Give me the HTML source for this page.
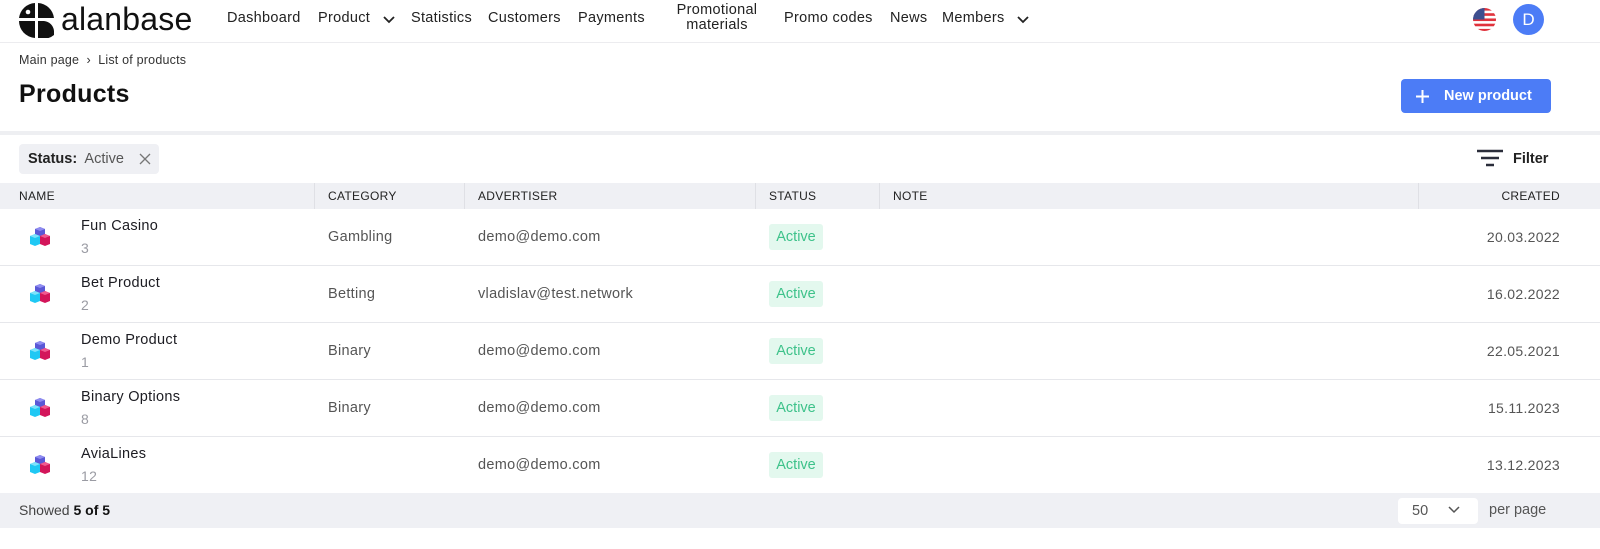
<!DOCTYPE html>
<html><head><meta charset="utf-8"><style>
*{box-sizing:border-box;margin:0;padding:0}
body{width:1600px;height:549px;background:#fff;font-family:"Liberation Sans",sans-serif;color:#1c1c22;position:relative;overflow:hidden;font-size:14px}
.a{position:absolute;white-space:nowrap}
.hdr{position:absolute;left:0;top:0;width:1600px;height:43px;border-bottom:1px solid #ececef}
.nav{top:10px;font-size:14.5px;color:#222;letter-spacing:0.3px}
.th{position:absolute;top:183px;left:0;width:1600px;height:26px;background:#eff0f4;font-size:12px;color:#222;letter-spacing:0.3px}
.th span{position:absolute;top:6px}
.th i{position:absolute;top:0;width:1px;height:26px;background:#dfe0e5}
.row{position:absolute;left:0;width:1600px;height:57px;border-bottom:1px solid #e6e7eb;letter-spacing:0.3px}
.nm{position:absolute;left:81px;top:9px;font-size:14.5px;color:#1c1c22}
.id{position:absolute;left:81px;top:31px;font-size:14px;color:#9a9ba3}
.c{position:absolute;top:20px;font-size:14.5px;color:#555}
.st{position:absolute;left:769px;top:15px;height:26px;width:54px;background:#e3f8ee;color:#3dc28a;border-radius:3px;font-size:14.5px;text-align:center;line-height:26px;letter-spacing:0}
.dt{position:absolute;right:40px;top:20px;font-size:14px;color:#555}
.ic{position:absolute;left:29px;top:17px}
</style></head><body>
<div class="hdr"></div>
<svg class="a" style="left:18px;top:3px" width="38" height="35" viewBox="0 0 38 35">
<path d="M17 0A17 17 0 0 0 1 15H17Z" fill="#111"/><path d="M20 0A17 17 0 0 1 36 15H20Z" fill="#111"/>
<path d="M1 18H17V35A17 17 0 0 1 1 18Z" fill="#111"/><path d="M20 18H26A11 11 0 0 1 36 28L36 32A17 17 0 0 1 20 35Z" fill="#111"/>
<circle cx="10" cy="9" r="2.3" fill="#fff"/></svg>
<div class="a" style="left:61px;top:1px;font-size:32px;color:#111;letter-spacing:0.2px">alanbase</div>
<div class="a nav" style="left:227px">Dashboard</div>
<div class="a nav" style="left:318px">Product</div>
<svg class="a" style="left:382px;top:15px" width="14" height="9"><path d="M2 2l5 5 5-5" stroke="#222" stroke-width="1.8" fill="none"/></svg>
<div class="a nav" style="left:411px">Statistics</div>
<div class="a nav" style="left:488px">Customers</div>
<div class="a nav" style="left:578px">Payments</div>
<div class="a" style="left:662px;top:3px;width:110px;text-align:center;font-size:14.5px;line-height:15px;color:#222;letter-spacing:0.3px">Promotional<br>materials</div>
<div class="a nav" style="left:784px">Promo codes</div>
<div class="a nav" style="left:890px">News</div>
<div class="a nav" style="left:942px">Members</div>
<svg class="a" style="left:1016px;top:15px" width="14" height="9"><path d="M2 2l5 5 5-5" stroke="#222" stroke-width="1.8" fill="none"/></svg>
<svg class="a" style="left:1473px;top:8px" width="23" height="23" viewBox="0 0 22 22"><defs><clipPath id="f"><circle cx="11" cy="11" r="11"/></clipPath></defs><g clip-path="url(#f)"><rect width="22" height="22" fill="#fff"/><rect y="0" width="22" height="2.5" fill="#e0323c"/><rect y="5" width="22" height="2.5" fill="#e0323c"/><rect y="10" width="22" height="2.5" fill="#e0323c"/><rect y="15" width="22" height="2.5" fill="#e0323c"/><rect y="20" width="22" height="2.5" fill="#e0323c"/><rect width="11" height="11" fill="#3d4f8f"/></g></svg>
<div class="a" style="left:1513px;top:4px;width:31px;height:31px;border-radius:50%;background:#4c7cf6;color:#fff;font-size:17px;text-align:center;line-height:31px">D</div>
<div class="a" style="left:19px;top:53px;font-size:12.5px;color:#333;letter-spacing:0.2px">Main page &nbsp;›&nbsp; List of products</div>
<div class="a" style="left:19px;top:80px;font-size:25px;font-weight:bold;color:#111;letter-spacing:0.3px">Products</div>
<div class="a" style="left:1401px;top:79px;width:150px;height:34px;background:#4c7cf6;border-radius:4px;color:#fff;font-weight:bold;font-size:14.5px;line-height:34px;padding-left:43px">New product</div>
<svg class="a" style="left:1415px;top:89px" width="15" height="15"><path d="M7.5 1v13M1 7.5h13" stroke="#fff" stroke-width="2"/></svg>
<div class="a" style="left:0;top:131px;width:1600px;height:4px;background:#eeeff2"></div>
<div class="a" style="left:19px;top:144px;width:140px;height:30px;background:#eff0f4;border-radius:4px;font-size:14.5px;line-height:30px;padding-left:9px"><b style="color:#222">Status:</b>&nbsp; <span style="color:#555">Active</span></div>
<svg class="a" style="left:139px;top:153px" width="12" height="12"><path d="M1 1l10 10M11 1L1 11" stroke="#777" stroke-width="1.3"/></svg>
<svg class="a" style="left:1477px;top:149px" width="26" height="20"><path d="M0 2h26M4 9h18M9 16h8" stroke="#2a2d3a" stroke-width="2.5"/></svg>
<div class="a" style="left:1513px;top:151px;font-size:14.5px;font-weight:bold;color:#222">Filter</div>
<div class="th"><span style="left:19px">NAME</span><i style="left:314px"></i><span style="left:328px">CATEGORY</span><i style="left:464px"></i><span style="left:478px">ADVERTISER</span><i style="left:755px"></i><span style="left:769px">STATUS</span><i style="left:879px"></i><span style="left:893px">NOTE</span><i style="left:1418px"></i><span style="right:40px">CREATED</span></div>
<svg width="0" height="0" style="position:absolute"><defs><g id="cube">
<path d="M6 3L11 1L16 3V10L11 12L6 10Z" fill="#5a58d6"/><path d="M6 3L11 5L16 3L11 1Z" fill="#8f8cf0"/>
<path d="M1 10L6 8L11 10V18L6 20L1 18Z" fill="#1fc8f4"/><path d="M1 10L6 12L11 10L6 8Z" fill="#7ee2fb"/>
<path d="M11 10L16 8L21 10V18L16 20L11 18Z" fill="#d3155a"/><path d="M11 10L16 12L21 10L16 8Z" fill="#f05a90"/>
</g></defs></svg>
<div class="row" style="top:209px"><svg class="ic" width="22" height="21"><use href="#cube"/></svg><div class="nm">Fun Casino</div><div class="id">3</div><div class="c" style="left:328px">Gambling</div><div class="c" style="left:478px">demo@demo.com</div><div class="st">Active</div><div class="dt">20.03.2022</div></div>
<div class="row" style="top:266px"><svg class="ic" width="22" height="21"><use href="#cube"/></svg><div class="nm">Bet Product</div><div class="id">2</div><div class="c" style="left:328px">Betting</div><div class="c" style="left:478px">vladislav@test.network</div><div class="st">Active</div><div class="dt">16.02.2022</div></div>
<div class="row" style="top:323px"><svg class="ic" width="22" height="21"><use href="#cube"/></svg><div class="nm">Demo Product</div><div class="id">1</div><div class="c" style="left:328px">Binary</div><div class="c" style="left:478px">demo@demo.com</div><div class="st">Active</div><div class="dt">22.05.2021</div></div>
<div class="row" style="top:380px"><svg class="ic" width="22" height="21"><use href="#cube"/></svg><div class="nm">Binary Options</div><div class="id">8</div><div class="c" style="left:328px">Binary</div><div class="c" style="left:478px">demo@demo.com</div><div class="st">Active</div><div class="dt">15.11.2023</div></div>
<div class="row" style="top:437px;border-bottom:none"><svg class="ic" width="22" height="21"><use href="#cube"/></svg><div class="nm">AviaLines</div><div class="id">12</div><div class="st">Active</div><div class="c" style="left:478px">demo@demo.com</div><div class="dt">13.12.2023</div></div>
<div class="a" style="left:0;top:493px;width:1600px;height:35px;background:#eff0f4"></div>
<div class="a" style="left:19px;top:502px;font-size:14px;color:#444">Showed <b style="color:#111">5 of 5</b></div>
<div class="a" style="left:1398px;top:498px;width:80px;height:26px;background:#fff;border-radius:4px;font-size:14.5px;color:#555;line-height:26px;padding-left:14px">50</div>
<svg class="a" style="left:1448px;top:506px" width="12" height="8"><path d="M1 1l5 5 5-5" stroke="#555" stroke-width="1.5" fill="none"/></svg>
<div class="a" style="left:1489px;top:502px;font-size:14.5px;color:#555">per page</div>
</body></html>
